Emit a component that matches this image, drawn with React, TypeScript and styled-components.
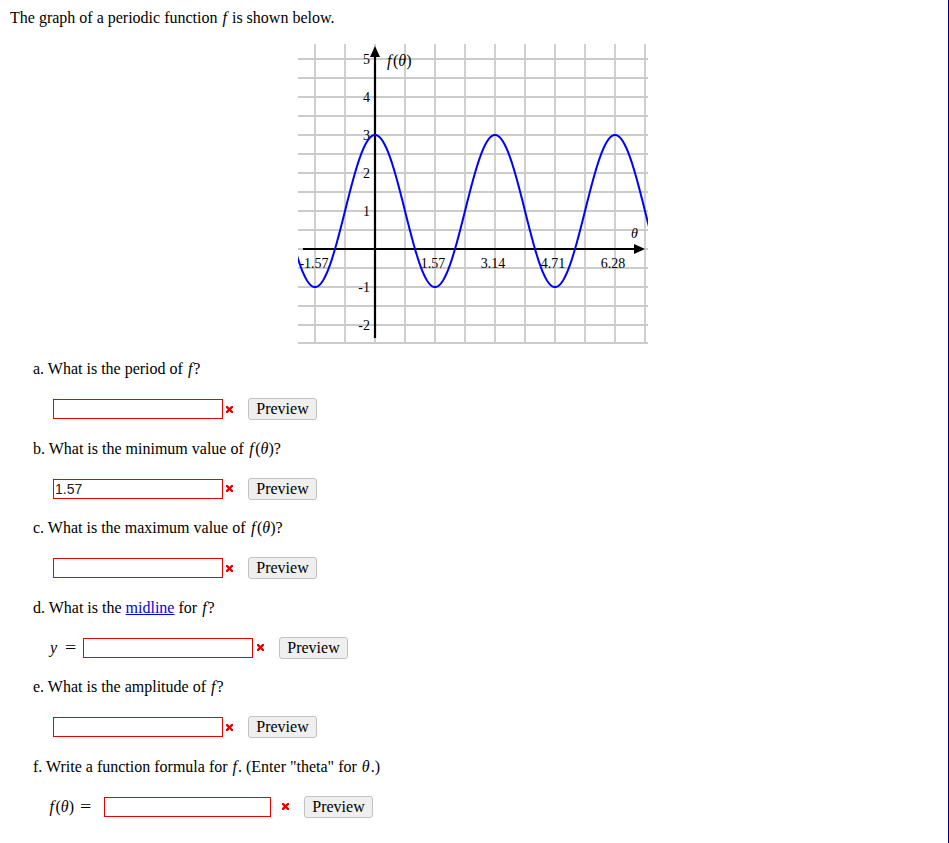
import React from "react";
import styled, { createGlobalStyle } from "styled-components";

const GlobalStyle = createGlobalStyle`
  html {
    min-height: 100%;
    border-right: 1px solid #000090;
    background: #fff;
  }
  body {
    margin: 8px;
    font-family: "Liberation Serif", "Times New Roman", serif;
    font-size: 16px;
    color: #000;
  }
`;

const Page = styled.div`
  display: flex;
  flex-direction: column;
`;

const Heading = styled.div`
  line-height: 18px;
  padding: 1px 0 0 2px;
`;

const GraphWrap = styled.div`
  display: flex;
  justify-content: center;
  margin-top: 17px;
  padding-right: 2px;
`;

const QuestionList = styled.div`
  display: flex;
  flex-direction: column;
  gap: 18.5px;
  margin-top: 16px;
`;

const Block = styled.div`
  display: flex;
  flex-direction: column;
`;

const Prompt = styled.div`
  line-height: 18px;
  height: 18px;
  padding-left: 25px;
  white-space: nowrap;
`;

const AnswerRow = styled.div<{ $indent: number }>`
  display: flex;
  align-items: center;
  height: 24px;
  margin-top: 19px;
  padding-left: ${(p) => p.$indent}px;
`;

const MathLabel = styled.span<{ $width: number }>`
  display: inline-flex;
  align-items: center;
  flex: none;
  width: ${(p) => p.$width}px;
  white-space: nowrap;
  font-size: 16px;
`;

const M = styled.span<{ $pad?: number }>`
  font-style: italic;
  font-family: "Liberation Serif", "Times New Roman", serif;
  padding: 0 ${(p) => (p.$pad ?? 1)}px;
`;

const Up = styled.span`
  font-style: normal;
`;

const Equals = styled.span<{ $gap: number }>`
  font-style: normal;
  margin-left: ${(p) => p.$gap}px;
  display: inline-block;
  transform: scaleX(1.25);
  transform-origin: left center;
`;

const AnswerInput = styled.input<{ $width: number }>`
  box-sizing: border-box;
  flex: none;
  width: ${(p) => p.$width}px;
  height: 20px;
  border: 1px solid #e60000;
  padding: 0 1px;
  margin: 0;
  font-family: "Liberation Sans", Arial, sans-serif;
  font-size: 14px;
  color: #1a1a1a;
  background: #fff;
  outline: none;
`;

const MarkBox = styled.span<{ $gap: number }>`
  display: inline-flex;
  margin-left: ${(p) => p.$gap}px;
  width: 7px;
  height: 7px;
`;

const PreviewButton = styled.button`
  box-sizing: border-box;
  margin-left: 15px;
  width: 69px;
  height: 22px;
  padding: 0;
  background: #efefef;
  border: 1px solid #c2c2c2;
  border-radius: 3px;
  font-family: "Liberation Serif", "Times New Roman", serif;
  font-size: 16px;
  color: #000;
  line-height: 20px;
`;

const Link = styled.a`
  color: #0000ee;
  text-decoration: underline;
`;

const GraphSvg = styled.svg`
  display: block;
  overflow: hidden;
`;

const Mark: React.FC<{ gap: number }> = ({ gap }) => (
  <MarkBox $gap={gap}>
    <svg width="7" height="7" viewBox="0 0 7 7">
      <path d="M1 1 L6 6 M6 1 L1 6" stroke="#e30000" strokeWidth="2.4" strokeLinecap="square" />
    </svg>
  </MarkBox>
);

const W = 350;
const H = 300;
const X0 = 77;
const Y0 = 205;
const PXU = 120 / Math.PI;
const PYU = 38;

function curvePath(): string {
  const pts: string[] = [];
  for (let sx = -2; sx <= W + 2; sx += 0.5) {
    const t = (sx - X0) / PXU;
    const f = 2 * Math.cos(2 * t) + 1;
    const sy = Y0 - f * PYU;
    pts.push(`${sx.toFixed(2)},${sy.toFixed(2)}`);
  }
  return "M" + pts.join(" L");
}

const Graph: React.FC = () => {
  const vLines: number[] = [];
  for (let k = 0; k < 12; k++) vLines.push(17 + 30 * k);
  const hLines: number[] = [];
  for (let k = 0; k < 16; k++) hLines.push(Math.min(299, 15 + 19 * k));
  const yLabels: [string, number][] = [
    ["5", 15],
    ["4", 53],
    ["3", 91],
    ["2", 129],
    ["1", 167],
    ["-1", 243],
    ["-2", 281],
  ];
  const xLabels: [string, number][] = [
    ["-1.57", 16],
    ["1.57", 135],
    ["3.14", 195],
    ["4.71", 255],
    ["6.28", 315],
  ];
  return (
    <GraphSvg width={W} height={H} viewBox={`0 0 ${W} ${H}`}>
      <g stroke="#cbcbcb" strokeWidth="1.8">
        {vLines.map((x) => (
          <line key={"v" + x} x1={x} y1={0} x2={x} y2={H} />
        ))}
        {hLines.map((y) => (
          <line key={"h" + y} x1={0} y1={y} x2={W} y2={y} />
        ))}
      </g>
      <g fontFamily="Liberation Serif, Times New Roman, serif" fontSize="14" fill="#000">
        {yLabels.map(([t, y]) => (
          <text key={"y" + t} x={72} y={y + 5} textAnchor="end">
            {t}
          </text>
        ))}
        {xLabels.map(([t, x]) => (
          <text key={"x" + t} x={x} y={224} textAnchor="middle">
            {t}
          </text>
        ))}
      </g>
      <g stroke="#000" strokeWidth="2.2">
        <line x1={5} y1={Y0} x2={338} y2={Y0} />
        <line x1={X0} y1={294} x2={X0} y2={12} />
      </g>
      <polygon points={`347,${Y0} 336,${Y0 - 5} 336,${Y0 + 5}`} fill="#000" />
      <polygon points={`${X0},2 ${X0 - 5},13 ${X0 + 5},13`} fill="#000" />
      <path d={curvePath()} fill="none" stroke="#0000ff" strokeWidth="2" />
      <text x={89} y={22} fontFamily="Liberation Serif, Times New Roman, serif" fontSize="16" fill="#000">
        <tspan fontStyle="italic">f</tspan>
        <tspan dx="1.5">(</tspan>
        <tspan fontStyle="italic">θ</tspan>
        <tspan>)</tspan>
      </text>
      <text x={333} y={194} fontFamily="Liberation Serif, Times New Roman, serif" fontSize="14" fontStyle="italic" fill="#000">
        θ
      </text>
    </GraphSvg>
  );
};

const FTheta: React.FC = () => (
  <>
    <M $pad={1.5}>f</M>
    <Up>(</Up>
    <M $pad={0}>θ</M>
    <Up>)</Up>
  </>
);

export default function App() {
  return (
    <>
      <GlobalStyle />
      <Page>
        <Heading>
          The graph of a periodic function <M>f</M> is shown below.
        </Heading>
        <GraphWrap>
          <Graph />
        </GraphWrap>
        <QuestionList>
          <Block>
            <Prompt>
              a. What is the period of <M>f</M>?
            </Prompt>
            <AnswerRow $indent={45}>
              <AnswerInput $width={170} defaultValue="" />
              <Mark gap={3} />
              <PreviewButton>Preview</PreviewButton>
            </AnswerRow>
          </Block>
          <Block>
            <Prompt>
              b. What is the minimum value of <FTheta />?
            </Prompt>
            <AnswerRow $indent={45}>
              <AnswerInput $width={170} defaultValue="1.57" />
              <Mark gap={3} />
              <PreviewButton>Preview</PreviewButton>
            </AnswerRow>
          </Block>
          <Block>
            <Prompt>
              c. What is the maximum value of <FTheta />?
            </Prompt>
            <AnswerRow $indent={45}>
              <AnswerInput $width={170} defaultValue="" />
              <Mark gap={3} />
              <PreviewButton>Preview</PreviewButton>
            </AnswerRow>
          </Block>
          <Block>
            <Prompt>
              d. What is the <Link href="#">midline</Link> for <M>f</M>?
            </Prompt>
            <AnswerRow $indent={42}>
              <MathLabel $width={33}>
                <M $pad={0}>y</M>
                <Equals $gap={8}>=</Equals>
              </MathLabel>
              <AnswerInput $width={170} defaultValue="" />
              <Mark gap={4} />
              <PreviewButton>Preview</PreviewButton>
            </AnswerRow>
          </Block>
          <Block>
            <Prompt>
              e. What is the amplitude of <M>f</M>?
            </Prompt>
            <AnswerRow $indent={45}>
              <AnswerInput $width={170} defaultValue="" />
              <Mark gap={3} />
              <PreviewButton>Preview</PreviewButton>
            </AnswerRow>
          </Block>
          <Block>
            <Prompt>
              f. Write a function formula for <M>f</M>. (Enter "theta" for <M>θ</M>.)
            </Prompt>
            <AnswerRow $indent={40}>
              <MathLabel $width={56}>
                <FTheta />
                <Equals $gap={6}>=</Equals>
              </MathLabel>
              <AnswerInput $width={167} defaultValue="" />
              <Mark gap={11} />
              <PreviewButton>Preview</PreviewButton>
            </AnswerRow>
          </Block>
        </QuestionList>
      </Page>
    </>
  );
}
